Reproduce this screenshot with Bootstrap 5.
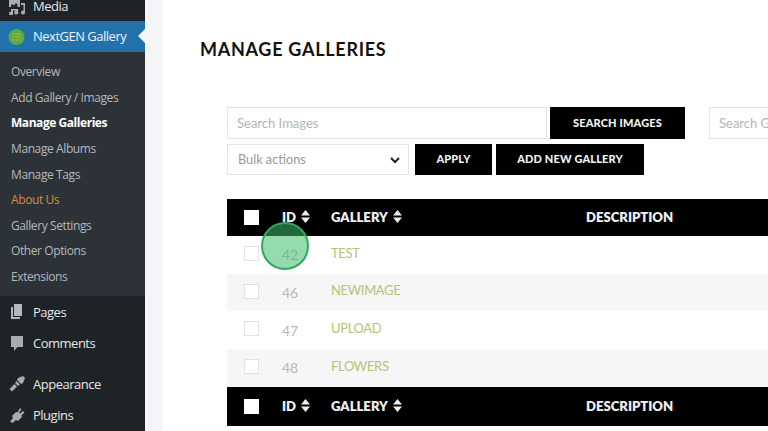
<!DOCTYPE html>
<html lang="en">
<head>
<meta charset="utf-8">
<title>Manage Galleries</title>
<link href="https://cdn.jsdelivr.net/npm/bootstrap@5.3.0/dist/css/bootstrap.min.css" rel="stylesheet">
<style>
html,body{height:431px;overflow:hidden;background:#f5f5f8;}
body{font-family:"Open Sans","Noto Sans",sans-serif;}
.wp-shell{height:431px;overflow:hidden;position:relative;}
.wp-side{width:145px;background:#1e2327;color:#e6e8ea;flex:none;height:431px;overflow:hidden;}
.wp-list{margin:-9px 0 0;padding:0;list-style:none;}
.wp-top{height:31px;display:flex;align-items:center;font-size:13px;letter-spacing:-.5px;padding-left:8px;color:#e4e6e8;}
.wp-first{height:30px;line-height:12px;}
.wp-top svg{width:18px;height:18px;margin-right:7px;flex:none;}
.wp-cur{background:#2371ab;color:#eef5fa;position:relative;}
.wp-cur::after{content:"";position:absolute;right:0;top:8px;border:7.5px solid transparent;border-right-color:#f5f5f8;border-left:0;}
.wp-sub{background:#2d3238;padding:7px 0 6px;list-style:none;margin:0;}
.wp-sub li{height:25.65px;line-height:25.65px;padding-left:11px;font-size:12px;letter-spacing:-.4px;color:#b4b9be;white-space:nowrap;}
.wp-sub .on{color:#fff;font-weight:700;letter-spacing:-.45px;}
.wp-sub .gold{color:#d08f33;}
.wp-gap{height:10px;}
.wp-gap2{height:1px;}
.wp-panel{margin-left:18px;background:#fff;flex:1;min-width:0;padding:0 0 0 37px;font-family:Lato,"Open Sans",sans-serif;overflow:hidden;}
.wp-title{font-size:18px;font-weight:700;letter-spacing:.72px;color:#111;margin:39px 0 0;line-height:20px;text-transform:uppercase;}
.tool-a{margin:48px 0 0 27px;gap:3px;width:700px;height:32px;}
.tool-b{margin:5px 0 0 27px;height:31px;gap:4px;}
.fld{border:1px solid #e4e4e4;background:#fff;color:#b5b5b5;font-size:13px;padding:0 9px;height:32px;border-radius:0;}
.fld::placeholder{color:#b5b5b5;opacity:1;}
.fld-a{width:320px;flex:none;}
.fld-b{width:120px;flex:none;margin-left:21px;}
.sel-box{width:182px;height:31px;border:1px solid #e4e4e4;color:#9a9a9a;font-size:12.7px;padding:1px 8px 0 10px;margin-right:2px;}
.blk{background:#000;color:#f2f2f2;font-weight:900;font-size:11px;letter-spacing:.15px;border-radius:0;border:0;padding:0;height:100%;text-transform:uppercase;display:flex;align-items:center;justify-content:center;}
.blk-s{width:135px;}
.blk-ap{width:77px;}
.blk-ad{width:148px;}
.gal-wrap{margin:24px 0 0 27px;width:700px;}
.gal-tb{margin:0;table-layout:fixed;width:700px;}
.gal-tb td,.gal-tb th{border:0;padding:0;vertical-align:middle;}
.gal-tb thead th,.gal-tb tfoot th{background:#000;color:#f0f0f0;font-size:13.1px;font-weight:800;height:37px;}
.gal-tb tfoot th{height:39px;padding-top:1px;}
.gal-tb tbody td{height:37.7px;background:#fff;color:#b9b9b9;font-size:14px;}
.gal-tb tbody tr:nth-child(even) td{background:#f6f6f6;}
.gal-tb tbody td.nm{padding-bottom:5px;}
.gal-tb tbody td.box{padding-bottom:3px;}
.c1{width:55px;padding-left:17px!important;}
.c2{width:49px;}
.c3{width:255px;}
.gal-name{color:#b3c47a;font-size:13px;letter-spacing:-.35px;text-transform:uppercase;}
.chk{width:15px;height:15px;display:block;background:#fff;}
td .chk{border:1px solid #e2e2e2;}
.sort{display:inline-block;width:9px;height:13px;margin-left:5px;vertical-align:-1px;}
.ping{position:absolute;left:261px;top:222px;width:48px;height:48px;border-radius:50%;background:rgba(62,190,105,.55);border:2px solid #2fa864;}
</style>
</head>
<body>
<div class="wp-shell d-flex">
  <nav class="wp-side">
    <ul class="wp-list">
      <li class="wp-top wp-first"><svg viewBox="0 0 18 18" fill="#a8adb2"><path d="M1 1h11v9H9.500V7.500L8 6 6 8.500 4.500 7 3 8.500V10H1z"/><path d="M13 6h4v9.500a2 2 0 1 1-1.500-1.900V8H13z"/><path d="M3 12h7v2.500a2 2 0 1 1-1.500-1H5v2.500a2 2 0 1 1-2-1.500z"/></svg>Media</li>
      <li class="wp-top wp-cur"><svg viewBox="0 0 18 18"><circle cx="8.500" cy="9" r="8" fill="#55ad4a"/><rect x="4.500" y="5" width="8" height="8" rx="1" fill="#8db33f"/><path d="M4.500 7.500h8M4.500 10.500h8M7 5v8M10 5v8" stroke="#6e9e3a" stroke-width=".8"/></svg>NextGEN Gallery</li>
    </ul>
    <ul class="wp-sub">
      <li>Overview</li>
      <li>Add Gallery / Images</li>
      <li class="on">Manage Galleries</li>
      <li>Manage Albums</li>
      <li>Manage Tags</li>
      <li class="gold">About Us</li>
      <li>Gallery Settings</li>
      <li>Other Options</li>
      <li>Extensions</li>
    </ul>
    <div class="wp-gap2"></div>
    <ul class="list-unstyled m-0">
      <li class="wp-top"><svg viewBox="0 0 18 18" fill="#b4b7c2"><path d="M6 1h8v12H6z"/><path d="M3 4h2v10h7v2H3z"/></svg>Pages</li>
      <li class="wp-top"><svg viewBox="0 0 18 18" fill="#a8adb2"><path d="M3 2h12v11H9.500L6 17v-4H3z"/></svg>Comments</li>
      <li class="wp-gap"></li>
      <li class="wp-top"><svg viewBox="0 0 18 18" fill="#a8adb2"><path d="M10 3l5-2 2 2-2 5-2 1-4-4z"/><path d="M8.500 6l3.500 3.500-2 1.500-3-3z"/><path d="M6.500 9l2.500 2.500L4 16.500 1.500 14z"/></svg>Appearance</li>
      <li class="wp-top"><svg viewBox="0 0 18 18" fill="#a8adb2"><path d="M12 2l1.500 1.500-2.500 3 1 1 3-2.500L16.500 6.500l-3 3 .5 1.500-4 4-2-1-3.500 3L2 15.500l3-3.500-1-2 4-4 1.500.5z"/></svg>Plugins</li>
    </ul>
  </nav>
  <main class="wp-panel">
    <h1 class="wp-title">Manage Galleries</h1>
    <form class="tool-a d-flex">
      <input class="fld fld-a" placeholder="Search Images" aria-label="Search Images">
      <button type="button" class="blk blk-s">Search Images</button>
      <input class="fld fld-b" placeholder="Search Galleries" aria-label="Search Galleries">
    </form>
    <div class="tool-b d-flex">
      <div class="sel-box d-flex align-items-center justify-content-between"><span>Bulk actions</span><svg width="10" height="7" viewBox="0 0 10 7"><path d="M1 1l4 4 4-4" fill="none" stroke="#222" stroke-width="2"/></svg></div>
      <button type="button" class="blk blk-ap">Apply</button>
      <button type="button" class="blk blk-ad">Add New Gallery</button>
    </div>
    <div class="gal-wrap">
      <table class="table gal-tb">
        <thead><tr>
          <th class="c1"><span class="chk"></span></th>
          <th class="c2">ID<svg class="sort" viewBox="0 0 9 13" fill="#eee"><path d="M4.500 0L9 5.500H0zM4.500 13L0 7.500h9z"/></svg></th>
          <th class="c3">GALLERY<svg class="sort" viewBox="0 0 9 13" fill="#eee"><path d="M4.500 0L9 5.500H0zM4.500 13L0 7.500h9z"/></svg></th>
          <th>DESCRIPTION</th>
        </tr></thead>
        <tbody>
          <tr><td class="c1 box"><span class="chk"></span></td><td>42</td><td class="nm"><span class="gal-name">Test</span></td><td></td></tr>
          <tr><td class="c1 box"><span class="chk"></span></td><td>46</td><td class="nm"><span class="gal-name">NewImage</span></td><td></td></tr>
          <tr><td class="c1 box"><span class="chk"></span></td><td>47</td><td class="nm"><span class="gal-name">Upload</span></td><td></td></tr>
          <tr><td class="c1 box"><span class="chk"></span></td><td>48</td><td class="nm"><span class="gal-name">Flowers</span></td><td></td></tr>
        </tbody>
        <tfoot><tr>
          <th class="c1"><span class="chk"></span></th>
          <th class="c2">ID<svg class="sort" viewBox="0 0 9 13" fill="#eee"><path d="M4.500 0L9 5.500H0zM4.500 13L0 7.500h9z"/></svg></th>
          <th class="c3">GALLERY<svg class="sort" viewBox="0 0 9 13" fill="#eee"><path d="M4.500 0L9 5.500H0zM4.500 13L0 7.500h9z"/></svg></th>
          <th>DESCRIPTION</th>
        </tr></tfoot>
      </table>
    </div>
  </main>
  <div class="ping"></div>
</div>
<script src="https://cdn.jsdelivr.net/npm/bootstrap@5.3.0/dist/js/bootstrap.bundle.min.js"></script>
</body>
</html>
